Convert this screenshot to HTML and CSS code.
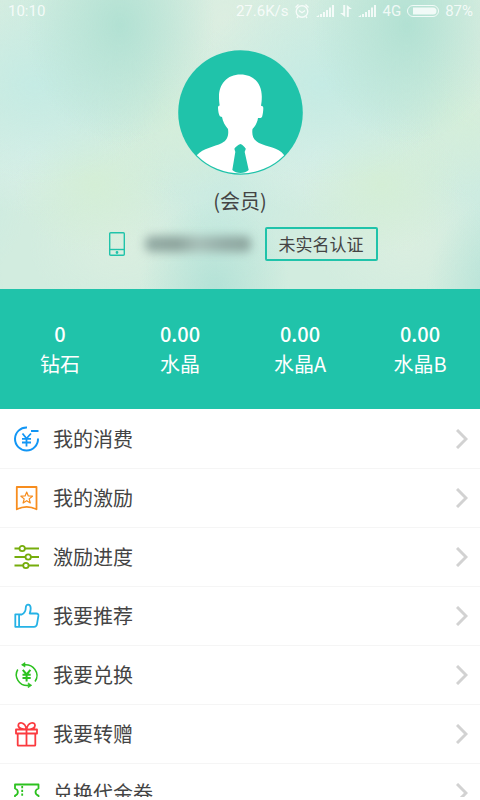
FILE: index.html
```html
<!DOCTYPE html>
<html lang="zh-CN">
<head>
<meta charset="utf-8">
<meta name="viewport" content="width=device-width, initial-scale=1">
<title>会员</title>
<link rel="stylesheet" href="styles.css">
</head>
<body>
<header class="hero">
  <div class="status">
    <span>10:10</span>
    <div class="status-right">
      <span>27.6K/s</span>
      <svg width="16" height="16" viewBox="0 0 16 16" fill="none" stroke="currentColor" stroke-width="1.4"><circle cx="8" cy="8.500" r="5.800"/><path d="M1.500 4.500 4.500 1.500M14.500 4.500 11.500 1.500M5 7.500l3 2.200 3-2.200M4 13.500l-1 1.500M12 13.500l1 1.500"/></svg>
      <svg width="18" height="12" viewBox="0 0 18 12" fill="currentColor"><path d="M0 12l3-2v2zM4 9h2v3H4zM7 7h2v5H7zM10 5h2v7h-2zM13 2.500h2V12h-2zM16 0h2v12h-2z"/></svg>
      <svg width="12" height="12" viewBox="0 0 12 12" fill="currentColor"><path d="M3.200 0h2v12L0 8h3.200zM6.800 12h2V4H12L6.800 0z"/></svg>
      <svg width="18" height="12" viewBox="0 0 18 12" fill="currentColor"><path d="M0 12l3-2v2zM4 9h2v3H4zM7 7h2v5H7zM10 5h2v7h-2zM13 2.500h2V12h-2zM16 0h2v12h-2z"/></svg>
      <span>4G</span>
      <svg width="32" height="12" viewBox="0 0 32 12"><rect x=".5" y=".5" width="31" height="11" rx="5.500" fill="none" stroke="currentColor"/><path d="M6 2.500h20a3.500 3.500 0 0 1 0 7H6z" fill="currentColor"/></svg>
      <span>87%</span>
    </div>
  </div>
  <svg class="avatar" viewBox="0 0 125 125" role="img" aria-label="头像">
    <defs><clipPath id="face"><circle cx="62.500" cy="62.500" r="61"/></clipPath></defs>
    <circle cx="62.500" cy="62.500" r="62.300" fill="#20c3aa"/>
    <g clip-path="url(#face)">
      <path fill="#fff" d="M62.500 24.500C49 24.500 41 34 41 47c0 4 .3 6 .7 8.500-1.400.3-1.700 1-1.700 2.500.2 3 .6 5.500 1.500 7.500.4 1.200 1.300 1.300 2.500 1.500.8 4.500 3 8.500 6 12 1 7-1 11.500-6 14-8 4-19 5-25 12L10 125h105l-9-20c-6-8-17-8-25-12-5-2.500-7.500-7-6.500-14 3-3 5-7 5.500-11 2 0 3.500 0 4-1 .8-2.500 1.300-6 1.300-9 0-1.500-1-2-2.300-2.200.5-3 .8-5 .8-8.800C84 34 76 24.500 62.500 24.500z"/>
      <path fill="#20c3aa" d="M62.500 94c1 0 4.500 3 5.200 4.500.3 1-1 2.500-1 3.500l4 18c-2 2-5 3-8.200 3s-6.200-1-8.200-3l3-18c0-1-1.100-2.500-.8-3.500.7-1.500 5-4.500 6-4.500z"/>
    </g>
  </svg>
  <h1 class="member">(会员)</h1>
  <div class="contact">
    <svg width="16" height="24" viewBox="0 0 16 24" fill="none" stroke="#20c3aa" stroke-width="1.400"><rect x=".7" y=".7" width="14.600" height="22.600" rx="1"/><path d="M1 17.500h14"/><circle cx="8" cy="20.500" r=".7" fill="#20c3aa"/></svg>
    <span class="masked"></span>
    <button class="verify" type="button">未实名认证</button>
  </div>
</header>

<dl class="stats">
  <div class="stat"><dd>0</dd><dt>钻石</dt></div>
  <div class="stat"><dd>0.00</dd><dt>水晶</dt></div>
  <div class="stat"><dd>0.00</dd><dt>水晶A</dt></div>
  <div class="stat"><dd>0.00</dd><dt>水晶B</dt></div>
</dl>

<nav class="menu">
  <a class="row" href="#spend">
    <svg class="icon blue" viewBox="0 0 28 28"><path d="M14 2.500A11.500 11.500 0 1 0 25 13.500M18 6h7.500" stroke-width="2"/><path d="M9.500 8.500l4 5 4.500-5M13.500 13.500v8M9 13.800h9M9 17.500h9" stroke-width="1.800"/></svg>
    <span class="label">我的消费</span>
    <svg class="chevron" viewBox="0 0 12 20"><path d="M1 1l9 9-9 9"/></svg>
  </a>
  <a class="row" href="#reward">
    <svg class="icon orange" viewBox="0 0 28 28"><path d="M3.800 3h19.700v22.300q-9.850-5-19.700 0z"/><path d="M13.700 8l1.600 4 4.200.2-3.300 2.700 1.100 4.100-3.600-2.300-3.600 2.300 1.100-4.100-3.300-2.700 4.200-.2z" stroke-width="1.200"/></svg>
    <span class="label">我的激励</span>
    <svg class="chevron" viewBox="0 0 12 20"><path d="M1 1l9 9-9 9"/></svg>
  </a>
  <a class="row" href="#progress">
    <svg class="icon olive" viewBox="0 0 28 28"><path d="M1.500 5.500h4.800M12 5.500h14M1.500 14h10.800M18 14h8M1.500 22.500h8.500M15.800 22.500H26"/><circle cx="9.200" cy="5.500" r="2.700"/><circle cx="15.200" cy="14" r="2.700"/><circle cx="12.900" cy="22.500" r="2.700"/></svg>
    <span class="label">激励进度</span>
    <svg class="chevron" viewBox="0 0 12 20"><path d="M1 1l9 9-9 9"/></svg>
  </a>
  <a class="row" href="#recommend">
    <svg class="icon sky" viewBox="0 0 28 28"><path d="M2.300 12.300h3.800v12.500H2.300zM6.100 12.500h2.700c3.200-1.500 4-4.500 4-7 0-4 4.700-3.600 4.900.5.100 2-.5 4-1 5.500h6.600c1.500 0 2.300 1 2.100 2.400l-1.400 8.300c-.3 1.600-1.300 2.600-3 2.600H6.100z"/></svg>
    <span class="label">我要推荐</span>
    <svg class="chevron" viewBox="0 0 12 20"><path d="M1 1l9 9-9 9"/></svg>
  </a>
  <a class="row" href="#exchange">
    <svg class="icon green" viewBox="0 0 28 28"><path d="M4.800 8.500C.5 15.500 6 25 15 24.500M9.500 4c11-2 18 8.500 12.500 16.500" stroke-width="1.500"/><path d="M8.500 3.800l3.500-2.300v4.600zM18.800 24.300l-3.600-2.400v4.800z" fill="currentColor" stroke-width=".6"/><path d="M9.800 8.800l3.800 4.700 3.800-4.700M13.600 13.500v7M9.500 13.800h8.200M9.500 17h8.200" stroke-width="2"/></svg>
    <span class="label">我要兑换</span>
    <svg class="chevron" viewBox="0 0 12 20"><path d="M1 1l9 9-9 9"/></svg>
  </a>
  <a class="row" href="#transfer">
    <svg class="icon red" viewBox="0 0 28 28"><path d="M3 9.500h21v4H3zM4.700 13.500V25a.7.700 0 0 0 .7.700h16.200a.7.700 0 0 0 .7-.7V13.500M13.500 9.500v16M13.500 9.500C10 9.500 5.300 8.500 5.300 5.500c0-4 6.700-4 8.200 4 1.500-8 8.500-8 8.500-4 0 3-5 4-8.500 4z"/></svg>
    <span class="label">我要转赠</span>
    <svg class="chevron" viewBox="0 0 12 20"><path d="M1 1l9 9-9 9"/></svg>
  </a>
  <a class="row" href="#voucher">
    <svg class="icon green" viewBox="0 0 28 28"><path d="M2 5.500h23.500v4c-4 1.200-4 6 0 7.200v5H2v-5c3.800-1.200 3.800-6 0-7.200z"/><path d="M9.200 7v14" stroke-dasharray="2.200 1.600"/></svg>
    <span class="label">兑换代金券</span>
    <svg class="chevron" viewBox="0 0 12 20"><path d="M1 1l9 9-9 9"/></svg>
  </a>
</nav>
</body>
</html>
```
FILE: styles.css
```css
* { box-sizing: border-box; }

body {
  margin: 0;
  height: 100vh;
  padding-bottom: 3px;
  display: flex;
  flex-direction: column;
  background: #fff;
  color: #444;
  font-family: "Noto Sans CJK SC", sans-serif;
}

.hero {
  flex: none;
  display: flex;
  flex-direction: column;
  align-items: center;
  padding-bottom: 28px;
  background-color: #d2ecdf;
  background-image:
    radial-gradient(ellipse 95px 120px at 120px 25px, #b2e1d3, #b2e1d300),
    radial-gradient(ellipse 75px 90px at 215px 288px, #b4e2d7, #b4e2d700),
    radial-gradient(ellipse 75px 90px at -72px 288px, #b4e2d7, #b4e2d700),
    radial-gradient(ellipse 130px 100px at 35px 85px, #c5ebe4, #c5ebe400),
    radial-gradient(ellipse 130px 100px at 322px 85px, #c5ebe4, #c5ebe400),
    radial-gradient(ellipse 100px 120px at 225px 20px, #dceee1, #dceee100),
    radial-gradient(ellipse 100px 120px at -62px 20px, #dceee1, #dceee100),
    radial-gradient(ellipse 80px 70px at 95px 185px, #d4eed6, #d4eed600),
    radial-gradient(ellipse 90px 80px at 180px 115px, #d4eeda, #d4eeda00),
    radial-gradient(ellipse 110px 60px at 40px 155px, #d8efe8, #d8efe800),
    radial-gradient(ellipse 110px 60px at 327px 155px, #d8efe8, #d8efe800),
    radial-gradient(ellipse 90px 70px at 120px 245px, #daeee0, #daeee000),
    radial-gradient(ellipse 90px 90px at 225px 200px, #caebe2, #caebe200),
    radial-gradient(ellipse 90px 90px at -62px 200px, #caebe2, #caebe200);
  background-size: 287px 100%;
}

.status {
  align-self: stretch;
  display: flex;
  justify-content: space-between;
  align-items: center;
  height: 22px;
  padding: 0 7px 0 8px;
  color: #fffc;
  font-family: Roboto, sans-serif;
  font-size: 15px;
}

.status-right {
  display: flex;
  align-items: center;
  gap: 6px;
}

.avatar {
  width: 125px;
  height: 125px;
  margin-top: 28px;
}

.member {
  margin: 12px 0;
  font-size: 20px;
  line-height: 28px;
  font-weight: 400;
}

.contact {
  display: flex;
  align-items: center;
  padding-left: 6px;
}

.masked {
  width: 106px;
  height: 16px;
  margin: 0 14px 0 20px;
  border-radius: 6px;
  background: linear-gradient(90deg, #94aca5, #8da39c 30%, #a7bfb8 50%, #93aca6 75%, #8da59e);
  filter: blur(5px);
}

.verify {
  height: 34px;
  padding: 0 12px;
  border: 2px solid #20c3aa;
  border-radius: 2px;
  background: transparent;
  color: #444;
  font: 400 17px/28px "Noto Sans CJK SC", sans-serif;
}

.stats {
  flex: none;
  display: grid;
  grid-template-columns: repeat(4, 1fr);
  margin: 0;
  padding: 30px 0;
  background: #20c3aa;
  color: #fff;
  text-align: center;
}

.stat dd {
  margin: 0;
  font-size: 20px;
  line-height: 30px;
  font-weight: 500;
}

.stat dt {
  font-size: 20px;
  line-height: 30px;
}

.menu {
  flex: 1;
  min-height: 0;
  padding-top: 1px;
  overflow-y: auto;
  scrollbar-width: none;
}

.row {
  display: flex;
  align-items: center;
  height: 59px;
  padding: 0 12px 0 13px;
  border-bottom: 1px solid #f5f5f5;
  color: #444;
  text-decoration: none;
}

.icon {
  flex: none;
  width: 28px;
  height: 28px;
  margin-right: 12px;
  fill: none;
  stroke: currentColor;
  stroke-width: 1.8;
  stroke-linejoin: round;
}

.label {
  flex: 1;
  font-size: 20px;
  line-height: 30px;
}

.chevron {
  flex: none;
  width: 12px;
  height: 20px;
  fill: none;
  stroke: #d2d2d2;
  stroke-width: 3;
}

.blue { color: #1296f5; }
.orange { color: #f78d1e; }
.olive { color: #76ad0c; }
.sky { color: #25b2e6; }
.green { color: #2cc11f; }
.red { color: #fb3a3f; }
```
